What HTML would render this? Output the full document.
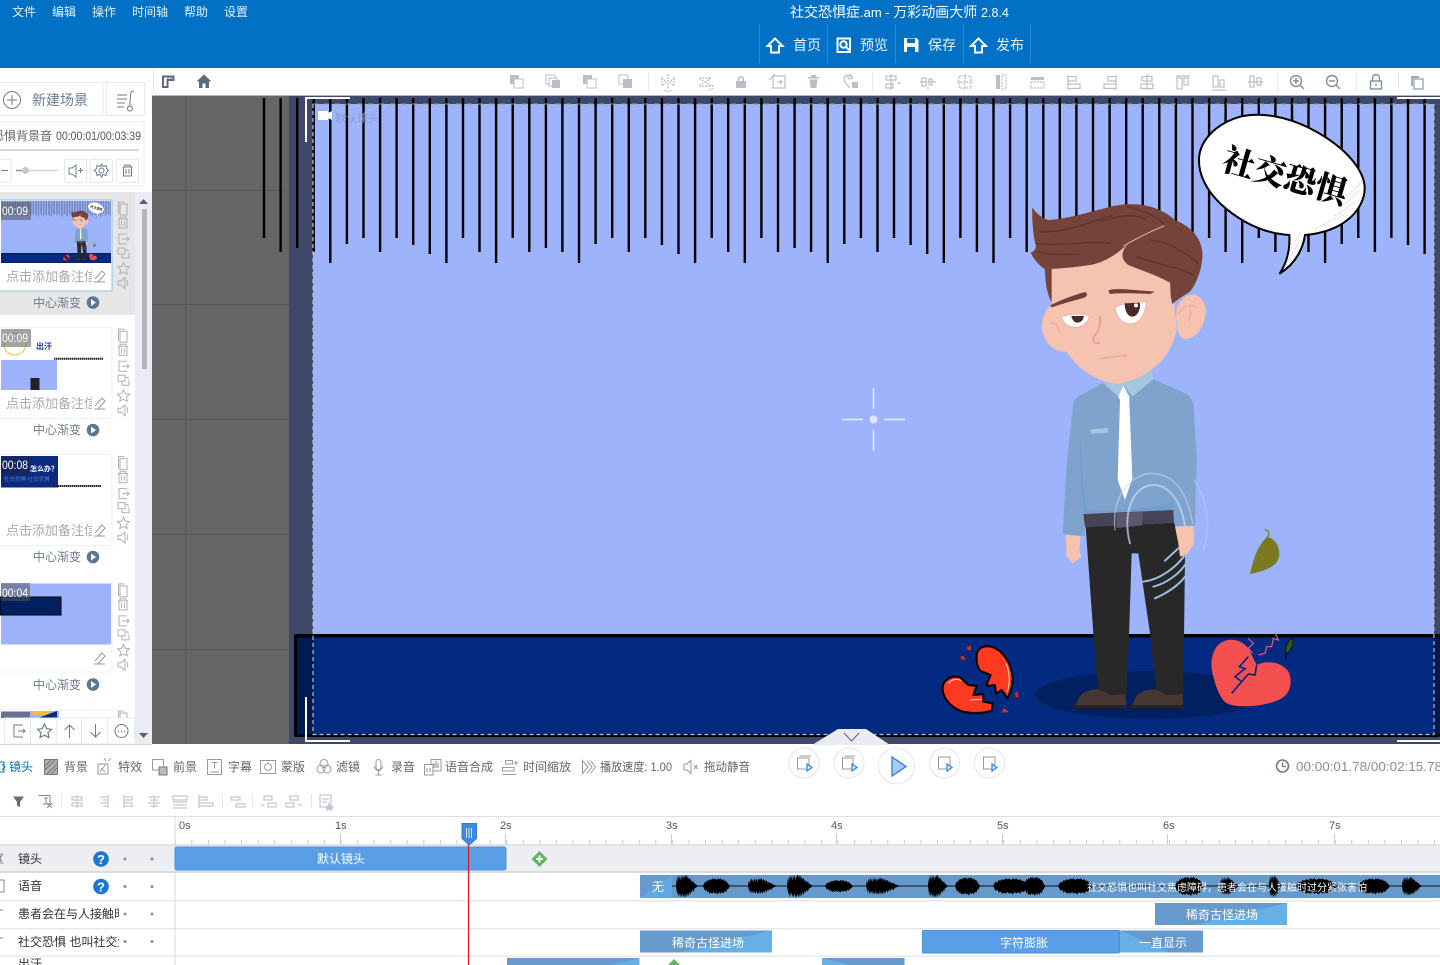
<!DOCTYPE html>
<html lang="zh"><head><meta charset="utf-8"><title>万彩动画大师</title>
<style>
html,body{margin:0;padding:0;background:#fff;width:1440px;height:965px;overflow:hidden}
svg{display:block;position:absolute;left:0;top:0}
text{font-family:"Liberation Sans","Noto Sans CJK SC",sans-serif;font-size:12px;fill:#666}
.m{fill:#e6f0fa}.n{fill:#eef5fc;font-size:14px}
.t{fill:#666;font-size:12px}
.w{fill:#fff;font-size:12px;text-anchor:middle}
.l{fill:#333;font-size:12px}
.g{fill:none;stroke:#b9bfc9;stroke-width:1.2}
.f{fill:#b9bfc9}
.k{fill:none;stroke:#9a9a9a;stroke-width:1}
.c{fill:none;stroke:#b0b0b0;stroke-width:1}
.s{fill:none;stroke:#c2c8d2;stroke-width:1.2}
.tr{fill:#6b7c90;font-size:12px}
.nt{fill:#aaa;font-size:13px}
.tm{fill:#fff;font-size:12px}
</style></head><body>
<svg width="1440" height="965" viewBox="0 0 1440 965" xmlns="http://www.w3.org/2000/svg">
<defs>
<clipPath id="c0"><rect x="1" y="201" width="110" height="62"/></clipPath>
<clipPath id="cl"><rect x="0" y="846" width="119" height="119"/></clipPath>
<clipPath id="cn"><rect x="0" y="190" width="92" height="560"/></clipPath>
<clipPath id="cp"><rect x="0" y="192" width="152" height="526"/></clipPath>
<pattern id="tk" x="174.8" y="0" width="16.57" height="10" patternUnits="userSpaceOnUse"><rect width="1" height="10" fill="#c8c8c8"/></pattern>
<path id="wb1" d="M0 0L3 -7 5 -3 8 -9 10 -5 13 -10 15 -6 18 -9 20 -4 23 -10 26 -6 29 -10 32 -5 35 -9 38 -7 41 -10 44 -8 47 -10 50 -6 53 -9 56 -7 60 -6 64 -7 68 -4 72 -5 76 -3 80 -4 85 -2 90 -1.500 100 0L90 1.500 85 2 80 5 76 3 72 6 68 4 64 8 60 5 56 9 53 6 50 10 47 7 44 10 41 6 38 10 35 8 32 10 29 6 26 10 23 7 20 10 18 5 15 9 13 6 10 10 8 4 5 8 3 4z"/>
<path id="wb2" d="M0 0L4 -3 8 -5 12 -4 16 -7 20 -6 25 -8 30 -7 35 -9 40 -8 45 -9 50 -7 55 -9 60 -8 65 -9 70 -7 75 -8 80 -6 85 -6 90 -4 95 -2 100 0L95 3 90 4 85 7 80 6 75 9 70 7 65 9 60 7 55 10 50 8 45 9 40 7 35 9 30 8 25 9 20 6 16 8 12 4 8 6 4 3z"/>
<g id="d" stroke="#000" stroke-width="2.400">
<path d="M0 98V238M16.600 98V252M33.200 98V248M49.700 98V252M66.300 98V263M82.900 98V244M99.500 98V238M116.100 98V252M132.600 98V238M149.200 98V245M165.800 98V254M182.400 98V263M199 98V238M215.500 98V252M232.100 98V263"/>
</g>
<g id="ci">
<path class="c" d="M120 204h7v11h-7zM118.500 214v-12h6"/>
<path class="c" d="M118 219h10M120 219v-2h6v2M119 219v9h8v-9M121.500 221v5M124.500 221v5"/>
<path class="c" d="M127 234h-8v10h8M122 239h7M127 237l2 2-2 2"/>
<path class="c" d="M118 248h7v6h-7zM122 254v4h7v-5M125 250h3v2"/>
<path class="c" d="M123.500 262.500l1.800 3.900 4.200.5-3.100 2.900.8 4.200-3.700-2.100-3.700 2.100.8-4.200-3.100-2.900 4.200-.5z"/>
<path class="c" d="M118 281v4h3l4 3.500v-11l-4 3.500zM127 280c1 1.500 1 4 0 5.500"/>
</g>
<g id="scene">
<rect x="313" y="104" width="1121" height="631" fill="#9db3fb"/>
<use href="#d" x="264"/><use href="#d" x="512.700"/><use href="#d" x="761.400"/><use href="#d" x="1010.100"/><use href="#d" x="1258.800"/>
<rect x="294" y="634" width="1146" height="103" rx="2" fill="#000"/>
<rect x="297" y="637.500" width="16" height="97" fill="#001a52"/>
<rect x="313" y="637.500" width="1121" height="97" fill="#022a80"/>
<rect x="1434" y="637.500" width="6" height="97" fill="#001a52"/>
<g transform="translate(920,400) scale(.33333)">
<ellipse cx="690" cy="885" rx="345" ry="72" fill="#00205f"/>
<path fill="#7fa3cc" d="M460 9C462 -5 480 -15 485 -15L545 -50 700 -62 770 -32 805 -15 820 9 830 170 825 378 762 378 760 340 490 340 495 408 428 402 440 190z"/>
<path fill="#6a9fd6" d="M492 338L760 330 760 305C700 325 600 335 500 330 490 290 485 200 482 100 478 200 485 300 492 338z" opacity=".8"/>
<path fill="#a7c5de" d="M550 -50L595 -10 612 -43 637 -10 700 -62 695 -85 560 -70z"/>
<path fill="#fff" d="M595 -10L610 -43 628 -10 628 0 637 235 615 300 593 240 600 0z"/>
<path fill="#a7c5de" d="M512 88L564 84 564 98 514 101z"/>
<path fill="#282828" d="M497 380L762 368 795 470 790 885 710 885 690 700 655 460 635 460 628 680 620 885 535 885 520 700z"/>
<path fill="#454355" d="M490 342L760 330 762 368 495 382z"/>
<path fill="#5a586a" d="M590 340L667 335 667 376 590 384z"/>
<path fill="#f6c3b0" d="M437 405L482 408 478 450 484 470 458 490 440 470zM765 380L820 378 823 430 800 465 780 470 775 430z"/>
<path fill="#463733" d="M468 915C475 885 495 868 530 868 550 870 565 885 575 885L615 882 620 915zM637 915C645 885 665 868 700 868 720 870 735 885 745 885L788 882 790 915z"/>
<path fill="#2a2220" d="M462 915H622V925H462zM630 915H792V925H630z"/>
<g fill="none" stroke="#c8daf2" stroke-linecap="round">
<path stroke-width="4" opacity=".6" d="M585 390C575 300 620 230 690 220 760 220 800 270 818 370"/>
<path stroke-width="6" opacity=".7" d="M630 430C605 340 640 255 700 255 750 255 785 310 795 380"/>
<path stroke-width="5" opacity=".35" d="M822 240C870 310 870 390 850 450"/>
<path stroke="#9dbde6" stroke-width="6" d="M735 482L775 445M670 545C720 540 770 500 795 465M700 560C740 550 780 520 798 490M705 595C750 575 780 550 795 530"/>
</g>
<path fill="#7c7a20" d="M1042 410C1065 418 1078 435 1078 465 1075 490 1055 510 990 522 1000 480 1010 440 1042 410z"/>
<path fill="none" stroke="#8a8a3a" stroke-width="5" d="M1042 412C1052 400 1045 392 1034 388"/>
<path fill="#f45050" d="M985 745C965 720 930 710 900 730 875 750 868 790 880 830 890 870 905 905 925 912 960 925 1040 920 1085 895 1110 880 1120 845 1105 815 1085 785 1040 780 1010 795z"/>
<path fill="none" stroke="#022a80" stroke-width="5" d="M985 770L958 800 975 806 945 830 965 845 935 880M985 822L1005 825 1010 795M965 845L985 822"/>
<path fill="none" stroke="#e0607a" stroke-width="3.500" d="M985 715L1000 730 985 745 998 760M1015 765L1035 760 1040 740 1055 740 1060 715 1075 720 1065 698"/>
<path fill="#2c5a20" stroke="#000" stroke-width="2" d="M1118 715C1105 720 1095 735 1097 762 1112 755 1122 735 1118 715z"/>
<path stroke="#000" stroke-width="3" d="M1098 755V780"/>
<g fill="#ff3a20" stroke="#000" stroke-width="6" stroke-linejoin="round">
<path d="M170 765C172 745 190 735 215 740 250 752 275 790 278 835 278 860 270 880 262 895L245 870 228 882 225 855 198 858 212 825 180 812C172 800 168 785 170 765z"/>
<path d="M68 860C72 838 95 825 120 832L145 855 170 858 160 885 190 882 190 905 218 910 215 932C190 940 150 942 120 932 90 920 65 890 68 860z"/>
</g>
<path fill="none" stroke="#ffd0c0" stroke-width="3" d="M258 790C270 820 270 850 262 875M85 850C95 838 110 835 125 842M150 900L185 898"/>
<path fill="#e02a18" d="M140 742L152 736 154 748 144 752zM120 770L132 768 136 780 124 778zM284 878L294 876 296 890 288 894zM244 938L252 924 268 936z"/>
<g transform="translate(240,-900)">
<path fill="#f6c3b0" d="M530 625C550 570 610 570 617 630 615 680 590 715 555 718 535 715 525 680 530 625z"/>
<path fill="#f6c3b0" d="M150 470L385 420 515 530 530 690C515 760 470 825 355 852 280 845 230 800 200 755 165 760 130 730 126 680 125 650 140 630 155 610z"/>
<path fill="none" stroke="#e8a79a" stroke-width="3" d="M535 640C555 615 575 610 590 625M570 625C575 640 570 655 565 665M152 672C165 660 175 680 180 700"/>
<path fill="#76433b" d="M97 322C105 335 125 355 145 360 200 358 290 330 340 318 400 305 470 312 525 360 560 375 600 400 607 455 610 500 590 550 570 575 555 585 530 600 517 612 510 590 512 565 510 548 470 525 420 510 385 495 365 480 358 460 385 430 350 465 310 488 270 495 220 503 180 505 155 507L155 608C140 580 135 540 135 508 115 495 100 475 92 458 100 455 106 450 108 440 100 410 95 360 97 322z"/>
<path fill="none" stroke="#5f322c" stroke-width="4" d="M115 395C190 400 260 370 340 345M108 430C200 440 270 420 330 430M110 455C160 465 210 465 235 462M300 365C360 345 410 340 440 360M410 470C460 490 530 500 580 525M450 420C510 425 560 460 595 490M380 320C430 330 470 350 490 370"/>
<path fill="none" stroke="#e6b7a0" stroke-width="3" d="M370 438C410 415 450 395 493 377"/>
<path fill="#6f3f38" d="M150 616C185 600 220 585 255 576 265 582 262 590 250 594 215 603 185 612 155 622zM325 572C335 562 400 570 465 575L450 582C410 580 360 578 330 582z"/>
<path fill="#fff" stroke="#eab0b5" stroke-width="3" d="M184 650C210 640 250 640 268 648 265 672 240 685 220 682 200 680 188 665 184 650z"/>
<path fill="#fff" stroke="#eab0b5" stroke-width="3" d="M345 622C375 605 415 605 438 605 438 640 420 670 395 672 365 672 348 650 345 622z"/>
<path fill="#4a2a28" d="M214 648H252C250 660 243 668 232 668 222 668 216 658 214 648zM374 610L420 608C422 630 412 650 397 650 382 650 374 630 374 610z"/>
<circle cx="408" cy="616" r="6" fill="#fff"/>
<path fill="none" stroke="#e59aa5" stroke-width="5" stroke-linecap="round" d="M300 650C302 680 295 695 281 710 275 725 290 735 297 728"/>
<path fill="none" stroke="#e8a090" stroke-width="3" d="M297 777C325 772 355 768 381 767"/>
</g>
</g>
<g transform="translate(1000,100) scale(.33333)">
<path fill="#fff" stroke="#000" stroke-width="6" stroke-linejoin="round" d="M597 175C600 120 650 70 720 50 785 35 860 50 930 85 1000 120 1060 170 1085 225 1110 280 1080 340 1020 375 990 392 950 402 915 405 910 440 890 490 840 520 865 480 870 440 868 405 790 400 720 365 660 310 620 270 595 225 597 175z"/>
<path fill="none" stroke="#bbb" stroke-width="3" stroke-dasharray="3 5" d="M1085 245L1040 290M1075 275L1020 325M1060 310L1000 350M1030 345L945 385M900 400L870 450M895 430L860 490"/>
</g>
<text transform="translate(1282,187) rotate(16)" text-anchor="middle" style="font-family:'Noto Serif CJK SC','Liberation Serif',serif;font-size:32px;font-weight:900;fill:#000">社交恐惧</text>
</g>
</defs>

<!-- top bar -->
<rect width="1440" height="68" fill="#0071c5"/>
<text class="m" x="12" y="16">文件</text><text class="m" x="52" y="16">编辑</text><text class="m" x="92" y="16">操作</text><text class="m" x="132" y="16">时间轴</text><text class="m" x="184" y="16">帮助</text><text class="m" x="224" y="16">设置</text>
<text x="790" y="17" style="font-size:14px;fill:#fff">社交恐惧症<tspan style="font-size:13px">.am - </tspan>万彩动画大师 <tspan style="font-size:12.500px">2.8.4</tspan></text>
<path d="M759.500 24V63M827.500 24V63M895.500 24V63M963.500 24V63M1030.500 24V63" stroke="#2d8ad2"/>
<g fill="none" stroke="#fff" stroke-width="2">
<path d="M775 38.500L767.500 46H771V52.500H779V46H782.500z"/>
<rect x="837.500" y="38.500" width="12.500" height="13.500"/>
<circle cx="843.500" cy="44.500" r="3.200"/><path d="M846 47L849 50"/>
<path d="M978.500 38.500L971 46H975V52.500H982V46H986z"/>
</g>
<path fill="#fff" d="M904 38H916.500L918.500 40V52H904zM907 38.500V43H915V38.500zM907 47V52H915V47z" fill-rule="evenodd"/>
<text class="n" x="793" y="50">首页</text><text class="n" x="860" y="50">预览</text><text class="n" x="928" y="50">保存</text><text class="n" x="996" y="50">发布</text>

<!-- toolbar -->
<rect x="0" y="68" width="1440" height="27" fill="#fff"/>
<rect x="152" y="95" width="1288" height="1.500" fill="#b4b8be"/>
<rect x="153" y="68" width="1" height="28" fill="#e8ebf0"/>
<path fill="none" stroke="#5a6b80" stroke-width="2" d="M163 87V76.500H173.500V80H167.500V87z"/>
<path d="M168 79V77M171 79V77" stroke="#5a6b80"/>
<path fill="#5a6b80" d="M204 74.500L196.500 81.500H199V88H202.500V83.500H205.500V88H209V81.500H211.500z"/>
<g>
<rect class="f" x="510" y="75" width="9" height="9"/><rect x="514" y="79" width="9" height="9" fill="#fff" stroke="#b9bfc9"/>
<rect x="546" y="75" width="9" height="9" fill="#fff" stroke="#b9bfc9"/><rect x="549" y="78" width="8" height="8" fill="#fff" stroke="#b9bfc9"/><rect class="f" x="552" y="80" width="8" height="8"/>
<rect class="f" x="583" y="75" width="9" height="9"/><rect x="587" y="79" width="9" height="9" fill="#fff" stroke="#b9bfc9"/>
<rect x="619" y="75" width="9" height="9" fill="#fff" stroke="#b9bfc9"/><rect class="f" x="623" y="79" width="9" height="9"/>
</g>
<path d="M648.500 72V92M872.500 72V92M1277.500 72V92M1356.500 72V92M1398.500 72V92" stroke="#e6e9ee"/>
<path class="g" stroke-dasharray="2 1" d="M668 74V90M662 78V86L666 82zM674 78V86L670 82zM664 90C666 92 670 92 672 90"/>
<path class="g" stroke-dasharray="2 1" d="M699 78H711L705 82zM699 86H711L705 82zM712 85C714 88 712 90 708 90"/>
<path class="f" d="M736 81H746V88H736zM738 81V79C738 75 744 75 744 79V81H742.500V79C742.500 77 739.500 77 739.500 79V81z"/>
<path class="g" d="M773 76H785V88H773zM771 78L775 74M769 80L773 76M777 82H782M780 80L782 82 780 84"/>
<path class="f" d="M808 77H819V78.500H808zM811 75H816V77H811zM809.500 79.500H817.500L816.500 88H810.500z"/>
<path class="g" d="M850 88C846 84 844 81 844 79 844 74 852 74 852 79M850 79a2 2 0 1 0-.1 0"/><rect class="f" x="852" y="82" width="6" height="6"/>
<path class="g" d="M891 74V90M886 76H896V80H886zM886 84H893V88H886zM897 83H901"/>
<path class="g" d="M920 82H936M922 78H926V86H922zM929 79H932V85H929zM928 87V90"/>
<path class="g" stroke-dasharray="2 1" d="M959 76H971V88H959zM965 74V90M957 82H973"/>
<path class="f" d="M996 75H1000V89H996z"/><path class="g" stroke-dasharray="2 1" d="M1002 75H1006V89H1002z"/>
<path class="f" d="M1031 77H1044V80H1031z"/><path class="g" stroke-dasharray="2 1" d="M1031 82H1044V88H1031z"/>
<path class="g" d="M1068 75V90M1068 76.500H1076V81H1068zM1068 84H1080V88.500H1068z"/>
<path class="g" d="M1116 75V90M1116 76.500H1108V81H1116zM1116 84H1104V88.500H1116z"/>
<path class="g" d="M1147 74V90M1142 76.500H1152V81H1142zM1141 84H1153V88.500H1141z"/>
<path class="g" d="M1176 76H1190M1177 78H1182V89H1177zM1184 78H1188V85H1184z"/>
<path class="g" d="M1212 90H1226M1213 76H1218V87H1213zM1220 80H1224V87H1220z"/>
<path class="g" d="M1248 82H1263M1250 76H1254V87H1250zM1257 78H1261V85H1257z"/>
<g fill="none" stroke="#7f8da0" stroke-width="1.400"><circle cx="1296" cy="81" r="5.500"/><path d="M1300 85L1304 89M1293 81H1299M1296 78V84"/><circle cx="1332" cy="81" r="5.500"/><path d="M1336 85L1340 89M1329 81H1335"/><rect x="1370.500" y="81" width="11" height="8"/><path d="M1372.500 81V78C1372.500 73.500 1379.500 73.500 1379.500 78V81"/><path d="M1376 84V86"/><path d="M1412 86V77H1419"/><rect x="1414" y="79" width="9" height="10" stroke="#9aa6b6"/></g>

<!-- canvas -->
<rect x="152" y="96" width="137" height="648" fill="#666"/>
<path d="M185.500 96V744M152 190.500H289M152 304.500H289M152 419.500H289M152 534.500H289M152 649.500H289" stroke="#565656"/>
<rect x="289" y="96" width="1151" height="648" fill="#3f4868"/>
<use href="#scene"/>
<path d="M313 104V734.500H1434V104" fill="none" stroke="#bbb" stroke-width="1.200" stroke-dasharray="4 3"/>
<path d="M313 104H1434" stroke="#a79a70" stroke-width="1" stroke-dasharray="5 6"/>
<path d="M306 142V98H350M1397 98H1440M306 697V741H350M1397 741H1440" fill="none" stroke="#fff" stroke-width="2"/>
<rect x="318" y="111" width="10" height="9" fill="#fff"/><path d="M328 113L332 111V120L328 118z" fill="#fff"/>
<text x="335" y="122" style="font-size:11px;fill:#8f9fd0">默认镜头</text>
<g stroke="#e8eeff" stroke-width="1.500" fill="none"><path d="M842 419.500H863M884 419.500H905M873.500 388V409M873.500 430V451"/></g>
<circle cx="873.500" cy="419.500" r="4" fill="#dfe6ff"/>
<path d="M812 745L838 729H866L890 745z" fill="#e8ebf1"/>
<path d="M844 733L851.500 741L859 733" fill="none" stroke="#5a6470"/>

<!-- left panel -->
<rect x="0" y="68" width="152" height="124" fill="#fff"/>
<rect x="-2" y="82.500" width="105" height="33" fill="#fff" stroke="#e6e9ef"/>
<rect x="106.500" y="82.500" width="38" height="33" fill="#fff" stroke="#e6e9ef"/>
<circle cx="12" cy="100" r="8.500" fill="none" stroke="#6b7c90"/><path d="M7 100H17M12 95V105" stroke="#6b7c90"/>
<text x="32" y="105" style="font-size:14px;fill:#6b7c90">新建场景</text>
<path d="M117 95H127M117 99H127M117 103H125M117 107H124M131 92C130 98 130 102 130 106M130 106A2.500 2.500 0 1 1 129.900 106M131 92L134 91" fill="none" stroke="#6b7c90"/>
<rect x="-2" y="121.500" width="146" height="64" fill="#fff" stroke="#eceff3"/>
<text x="-8" y="140">恐惧背景音</text><text x="56" y="140" textLength="85" lengthAdjust="spacingAndGlyphs" style="font-size:12px;fill:#555">00:00:01/00:03:39</text>
<rect x="0" y="149" width="139" height="2" fill="#d8d8d8"/>
<g fill="#fff" stroke="#e6e9ef"><rect x="-3" y="159.500" width="14" height="23" rx="1"/><rect x="64.500" y="159.500" width="22" height="23" rx="1"/><rect x="90.500" y="159.500" width="22" height="23" rx="1"/><rect x="116.500" y="159.500" width="22" height="23" rx="1"/></g>
<path d="M1 170.500H8" stroke="#6b7c90"/>
<path d="M16 170.500H22" stroke="#8a96a5" stroke-width="1.500"/><path d="M28 170.500H58" stroke="#d8d8d8" stroke-width="1.500"/><circle cx="25.500" cy="170.500" r="3.500" fill="#c4c8cc"/>
<path d="M69 168V174H72L76 177V165L72 168zM78 170.500H83M80.500 168V173" fill="none" stroke="#6b7c90"/>
<circle cx="101.500" cy="170.500" r="2.500" fill="none" stroke="#6b7c90"/><path d="M101.500 164L103 166.500 106 165.500 106.500 168.500 108.500 170.500 106.500 172.500 106 175.500 103 174.500 101.500 177 100 174.500 97 175.500 96.500 172.500 94.500 170.500 96.500 168.500 97 165.500 100 166.500z" fill="none" stroke="#6b7c90"/>
<path d="M122.500 167H132.500M125 167V165H130V167M123.500 167V176H131.500V167M126 169V174M129 169V174" fill="none" stroke="#6b7c90"/>

<rect x="0" y="192" width="135" height="552" fill="#fff"/>
<rect x="135" y="192" width="17" height="552" fill="#e9edf3"/>
<rect x="0" y="192" width="135" height="123" fill="#e6e6e6"/>
<path d="M139 204L143.500 199L148 204z" fill="#5a6470"/>
<rect x="142" y="209" width="5" height="160" fill="#b6b6b6"/>
<path d="M139 733L143.500 738L148 733z" fill="#5a6470"/>

<g clip-path="url(#cp)">
<!-- card 1 -->
<rect x="-2" y="200" width="114" height="91" fill="#fff" stroke="#8ec3e6"/>
<rect x="1" y="201" width="110" height="62" fill="#9db3fb"/>
<g clip-path="url(#c0)"><use href="#scene" transform="translate(-29.700,190.800) scale(.0981)"/></g>
<rect x="1" y="202" width="30" height="18" fill="#555" opacity=".55"/>
<text class="tm" x="2" y="215" textLength="26" lengthAdjust="spacingAndGlyphs">00:09</text>
<g clip-path="url(#cn)"><text class="nt" x="6" y="281">点击添加备注信息</text></g>
<path class="k" d="M94 282H105M95 279L102 271 105 274 98 282"/>
<text class="tr" x="33" y="307">中心渐变</text><circle cx="93" cy="302.500" r="6.300" fill="#5f7590"/><path d="M91 299V306L96 302.500z" fill="#fff"/>
<use href="#ci"/>
<!-- card 2 -->
<rect x="-2" y="327.500" width="114" height="91" fill="#fff" stroke="#f2f2f2"/>
<circle cx="15" cy="344" r="11" fill="none" stroke="#f0c040"/>
<rect x="1" y="329" width="30" height="18" fill="#666" opacity=".6"/>
<text class="tm" x="2" y="342" textLength="26" lengthAdjust="spacingAndGlyphs">00:09</text>
<text x="36" y="349" style="font-size:8px;font-weight:bold;fill:#1a3a9a">出汗</text>
<path d="M54 358.700H103" stroke="#222" stroke-width="2" stroke-dasharray="1.500 .5"/>
<rect x="1" y="360" width="56" height="30" fill="#9db3fb"/>
<rect x="30.500" y="378" width="9" height="12" fill="#222"/>
<g clip-path="url(#cn)"><text class="nt" x="6" y="408">点击添加备注信息</text></g>
<path class="k" d="M94 409H105M95 406L102 398 105 401 98 409"/>
<text class="tr" x="33" y="434">中心渐变</text><circle cx="93" cy="430" r="6.300" fill="#5f7590"/><path d="M91 426.500V433.500L96 430z" fill="#fff"/>
<use href="#ci" y="127.300"/>
<!-- card 3 -->
<rect x="-2" y="454.500" width="114" height="91" fill="#fff" stroke="#f2f2f2"/>
<rect x="1" y="456" width="57" height="31.500" fill="#0a2a80"/>
<text x="30" y="471" style="font-size:7px;font-weight:bold;fill:#fff">怎么办？</text>
<text x="4" y="481" style="font-size:5.500px;fill:#5c7bc8">社交恐惧 社交恐惧</text>
<rect x="1" y="457" width="28" height="18" fill="#223" opacity=".45"/>
<text class="tm" x="2" y="469" textLength="26" lengthAdjust="spacingAndGlyphs">00:08</text>
<path d="M54 486H101" stroke="#222" stroke-width="2" stroke-dasharray="1.500 .5"/>
<g clip-path="url(#cn)"><text class="nt" x="6" y="535">点击添加备注信息</text></g>
<path class="k" d="M94 536H105M95 533L102 525 105 528 98 536"/>
<text class="tr" x="33" y="561">中心渐变</text><circle cx="93" cy="557" r="6.300" fill="#5f7590"/><path d="M91 553.500V560.500L96 557z" fill="#fff"/>
<use href="#ci" y="254.600"/>
<!-- card 4 -->
<rect x="-2" y="582" width="114" height="90" fill="#fff" stroke="#f2f2f2"/>
<rect x="1" y="583.500" width="110" height="61" fill="#9db3fb"/>
<rect x="0" y="597" width="61" height="18" fill="#00205f" stroke="#000"/>
<rect x="1" y="583" width="29" height="18" fill="#555" opacity=".55"/>
<text class="tm" x="2" y="597" textLength="26" lengthAdjust="spacingAndGlyphs">00:04</text>
<path class="k" d="M94 664H105M95 661L102 653 105 656 98 664"/>
<text class="tr" x="33" y="689">中心渐变</text><circle cx="93" cy="684.500" r="6.300" fill="#5f7590"/><path d="M91 681V688L96 684.500z" fill="#fff"/>
<use href="#ci" y="381.900"/>
<!-- card 5 -->
<rect x="-2" y="710" width="114" height="30" fill="#fff" stroke="#f2f2f2"/>
<rect x="1" y="711" width="58" height="30" fill="#9db3fb"/><path d="M38 718L57 711V730H38z" fill="#0a2a80"/><path d="M30 711C35 717 45 717 52 711z" fill="#f8c020"/>
<rect x="1" y="712" width="29" height="18" fill="#444" opacity=".6"/>
<use href="#ci" y="509"/>
</g>
<!-- panel bottom buttons -->
<rect x="4.500" y="718" width="130" height="26" fill="#fff" stroke="#e6e9ef"/>
<path d="M30.500 718V744M57 718V744M81.500 718V744M107.500 718V744" stroke="#e6e9ef"/>
<path fill="none" stroke="#6b7c90" d="M23 725H14V737H23M18 731H25M23 729L25 731 23 733"/>
<path fill="none" stroke="#6b7c90" stroke-width="1.200" d="M44.500 724L46.700 728.700 51.500 729.300 48 732.700 49 737.600 44.500 735.200 40 737.600 41 732.700 37.500 729.300 42.300 728.700z"/>
<path fill="none" stroke="#6b7c90" d="M69.500 738V725M64.500 730L69.500 725 74.500 730M95.500 724V737M90.500 732L95.500 737 100.500 732"/>
<circle cx="121.500" cy="731" r="6.500" fill="none" stroke="#6b7c90"/><path d="M118 731.500H119M121 731.500H122M124 731.500H125" stroke="#6b7c90" stroke-width="1.500"/>
<rect x="0" y="744" width="152" height="1" fill="#cfd2d6"/>

<!-- toolbar row 1 -->
<path d="M0 762H4V772H0M2 764L5 767 2 770" fill="none" stroke="#0071c5"/>
<text x="9" y="771" style="font-size:12px;fill:#0071c5">镜头</text>
<rect x="44.500" y="759.500" width="13" height="15" fill="#b0b0b0" stroke="#777"/><path d="M45 766L51 760M45 770L55 760M47 774L57 764M51 774L57 768" stroke="#777"/>
<text class="t" x="64" y="771">背景</text>
<path class="k" d="M98 764H108V774H98zM104 758L106 761M111 758L109 761M106 764L100 772"/><path d="M101 768L105 772" stroke="#aaa"/>
<text class="t" x="118" y="771">特效</text>
<path class="k" d="M152.500 759.500H163.500V770H152.500z"/><rect x="159" y="767" width="8" height="8" fill="#bbb" stroke="#777"/>
<text class="t" x="173" y="771">前景</text>
<rect class="k" x="207.500" y="759.500" width="14" height="15"/><path class="k" d="M211.500 762.500H217.500M214.500 762.500V768.500M210 772H219"/>
<text class="t" x="228" y="771">字幕</text>
<rect class="k" x="260.500" y="760.500" width="15" height="13" fill="#eee"/><circle class="k" cx="268" cy="767" r="3.500"/>
<text class="t" x="281" y="771">蒙版</text>
<g class="k"><circle cx="324" cy="763.500" r="4"/><circle cx="321" cy="769" r="4"/><circle cx="327" cy="769" r="4"/></g>
<text class="t" x="336" y="771">滤镜</text>
<rect class="k" x="376" y="759.500" width="5" height="10" rx="2.500"/><path class="k" d="M374.500 766C374.500 772 382.500 772 382.500 766M378.500 771V775M375.500 775H381.500"/>
<text class="t" x="391" y="771">录音</text>
<path class="k" d="M424.500 764.500H433V775H424.500zM431 764V759.500H441V771H433"/><path d="M434 768V763M436 768V761M438 768V763M427 772V768M430 772V768" stroke="#888"/>
<text class="t" x="445" y="771">语音合成</text>
<path class="k" d="M505.500 760.500H512.500V764H505.500zM502.500 767.500H514V771H502.500zM502.500 774.500H516M514 763H518M516 761V765"/>
<text class="t" x="523" y="771">时间缩放</text>
<path class="k" d="M582.500 760.500V773.500L588 767zM587 760.500L592 767 587 773.500M590.500 760.500L595.500 767 590.500 773.500"/>
<text class="t" x="600" y="771" textLength="72" lengthAdjust="spacingAndGlyphs">播放速度: 1.00</text>
<path class="k" d="M684 764V770H687L691 773.500V760.500L687 764zM694 765L697.500 769M697.500 765L694 769"/>
<text class="t" x="704" y="771" textLength="46" lengthAdjust="spacingAndGlyphs">拖动静音</text>
<!-- playback -->
<g fill="#fff" stroke="#e4e4e4">
<ellipse cx="804" cy="763" rx="15" ry="15"/><ellipse cx="849" cy="763" rx="15" ry="15"/><ellipse cx="896.500" cy="766" rx="18" ry="18"/><ellipse cx="944.500" cy="763" rx="15" ry="15"/><ellipse cx="989.500" cy="763" rx="15" ry="15"/>
</g>
<g fill="none" stroke="#9a9a9a">
<path d="M797.500 758H809V769H797.500zM799.500 756H811"/>
<path d="M842.500 758H853V769H842.500zM844.500 756H855"/>
<path d="M938.500 757H950V769H938.500z"/>
<path d="M983.500 757H995V769H983.500z"/>
</g>
<g fill="#e6f1fd" stroke="#2d7fe0" stroke-width="1.200">
<path d="M807 764V771L812 767.500z"/><path d="M852 764V771L857 767.500z"/><path d="M947 764V771L952 767.500z"/><path d="M992 764V771L997 767.500z"/>
</g>
<path d="M892 757V776L906 766.500z" fill="#a9cbf0" stroke="#2d7fe0" stroke-width="1.300"/>
<circle cx="1282.500" cy="766" r="6" fill="none" stroke="#6b7c90" stroke-width="1.600"/><path d="M1282.500 762.500V766.500H1286" fill="none" stroke="#6b7c90" stroke-width="1.300"/>
<text x="1296" y="771" textLength="146" lengthAdjust="spacingAndGlyphs" style="font-size:13px;fill:#8a8f96">00:00:01.78/00:02:15.78</text>

<!-- toolbar row 2 -->
<path d="M13 796.500H24L20 802V807L17 805.500V802z" fill="#5f6d7e"/>
<path d="M38.500 795.500H50V804H43M44 798H48M46 798V803" fill="none" stroke="#7f8a98"/><path d="M47 803L52 808M52 803L47 808" stroke="#7f8a98"/>
<path d="M61.500 794V808M222.500 794V808M252.500 794V808M311.500 794V808" stroke="#e4e6ea"/>
<g class="s">
<path d="M77 795V808M72 797H82V800H72zM72 803H82V806H72z"/>
<path d="M108 795V808M100 797H108M103 800H108M100 803H108M103 806H108"/>
<path d="M124 795V808M124 797H132V800H124M124 803H132V806H124"/>
<path d="M154 795V808M148 797H160M150 800H158M148 803H160M150 806H158"/>
<path d="M173 796H187V800H173zM173 802H187M173 805H187M173 808H187" />
<path d="M199 795V808M199 797H207V800H199M199 803H213V806H199"/>
<path d="M231 797H240V800H231zM236 804H245V807H236z"/>
<path d="M264 796H272V800H264zM268 803H276V807H268zM261 805H265M290 796H298V800H290zM286 803H294V807H286zM298 805H302"/>
<path d="M320 795H331V807H320zM322 799H329M322 802H327"/>
</g>
<path d="M329 802L331 806 334 806.300 332 808.500 332.500 811 329 810 326 811 326.500 808.500 324.500 806.300 327.500 806z" fill="#c2c8d2"/>

<!-- ruler -->
<rect x="0" y="816" width="1440" height="1" fill="#dcdee2"/>
<text x="179" y="829" style="font-size:11px;fill:#555">0s</text><text x="335" y="829" style="font-size:11px;fill:#555">1s</text><text x="500" y="829" style="font-size:11px;fill:#555">2s</text><text x="666" y="829" style="font-size:11px;fill:#555">3s</text><text x="831" y="829" style="font-size:11px;fill:#555">4s</text><text x="997" y="829" style="font-size:11px;fill:#555">5s</text><text x="1163" y="829" style="font-size:11px;fill:#555">6s</text><text x="1329" y="829" style="font-size:11px;fill:#555">7s</text>
<rect x="175" y="840" width="1265" height="4" fill="url(#tk)"/>
<path d="M340.500 834V844M505.500 834V844M671.500 834V844M836.500 834V844M1002.500 834V844M1167.500 834V844M1334.500 834V844" stroke="#c8c8c8"/>
<rect x="0" y="844" width="1440" height="2" fill="#e0e2e6"/>
<rect x="0" y="846" width="1440" height="25" fill="#eceef2"/>
<rect x="0" y="871" width="1440" height="2" fill="#d9dbdf"/>
<rect x="0" y="900" width="1440" height="1.500" fill="#e6e8eb"/>
<rect x="0" y="928" width="1440" height="1.500" fill="#e6e8eb"/>
<rect x="0" y="955.500" width="1440" height="1.500" fill="#e6e8eb"/>
<rect x="174.500" y="816" width="1" height="149" fill="#d6d8dc"/>
<!-- row labels -->
<path d="M0 853V864M3 853L0 858.500 3 864M0 880H4V892H0M-1 910H3M-1 938H3" fill="none" stroke="#888"/>
<g clip-path="url(#cl)">
<text class="l" x="18" y="863">镜头</text><text class="l" x="18" y="890">语音</text><text class="l" x="18" y="918">患者会在与人接触时</text><text class="l" x="18" y="946">社交恐惧 也叫社交焦</text><text class="l" x="18" y="968">出汗</text>
</g>
<circle cx="101" cy="859" r="7.800" fill="#1c75d2"/><circle cx="101" cy="886.500" r="7.800" fill="#1c75d2"/>
<text x="101" y="864" text-anchor="middle" style="font-size:13px;font-weight:bold;fill:#fff">?</text><text x="101" y="891.500" text-anchor="middle" style="font-size:13px;font-weight:bold;fill:#fff">?</text>
<g fill="#8a8f96"><circle cx="125" cy="859" r="1.500"/><circle cx="152" cy="859" r="1.500"/><circle cx="125" cy="886.500" r="1.500"/><circle cx="152" cy="886.500" r="1.500"/><circle cx="125" cy="914" r="1.500"/><circle cx="152" cy="914" r="1.500"/><circle cx="125" cy="941.500" r="1.500"/><circle cx="152" cy="941.500" r="1.500"/></g>
<!-- blocks -->
<rect x="175" y="847" width="331" height="23" rx="2" fill="#5a9ee6" stroke="#4b90db"/>
<text class="w" x="341" y="863">默认镜头</text>
<path d="M539.500 851L547.500 859 539.500 867 531.500 859z" fill="#63b463"/><path d="M539.500 855.500V862.500M536 859H543" stroke="#fff" stroke-width="2"/>
<!-- voice -->
<rect x="640" y="875" width="800" height="23" rx="1" fill="#6699cc"/>
<path d="M640 898L672 875V898z" fill="#5fa8e6"/>
<text class="w" x="658" y="891">无</text>
<path d="M672 886H1440" stroke="#111" stroke-width="1"/>
<g fill="#000">
<use href="#wb1" transform="translate(676,886) scale(.22,1.150)"/>
<use href="#wb2" transform="translate(703,886) scale(.27,.85)"/>
<use href="#wb1" transform="translate(748,886) scale(.29,.8)"/>
<use href="#wb1" transform="translate(787,886) scale(.26,1.150)"/>
<use href="#wb2" transform="translate(825,886) scale(.28,.65)"/>
<use href="#wb1" transform="translate(866,886) scale(.34,.85)"/>
<use href="#wb1" transform="translate(928,886) scale(.2,1.150)"/>
<use href="#wb2" transform="translate(955,886) scale(.25,.95)"/>
<use href="#wb2" transform="translate(993,886) scale(.36,.85)"/>
<use href="#wb2" transform="translate(1023,886) scale(.22,1)"/>
<use href="#wb2" transform="translate(1058,886) scale(.35,.85)"/>
<use href="#wb2" transform="translate(1175,886) scale(.29,1)"/>
<use href="#wb1" transform="translate(1220,886) scale(.19,.9)"/>
<use href="#wb1" transform="translate(1269,886) scale(.13,1.100)"/>
<use href="#wb2" transform="translate(1296,886) scale(.41,.85)"/>
<use href="#wb2" transform="translate(1358,886) scale(.32,.85)"/>
<use href="#wb1" transform="translate(1402,886) scale(.2,.95)"/>
</g>
<text x="1087" y="891" style="font-size:10px;fill:#fff">社交恐惧也叫社交焦虑障碍，患者会在与人接触时过分紧张害怕</text>
<!-- row 3 -->
<rect x="1155" y="903" width="132" height="22" fill="#6699cc"/><path d="M1287 903V925H1195z" fill="#66b0e6"/>
<text class="w" x="1222" y="919">稀奇古怪进场</text>
<!-- row 4 -->
<rect x="640" y="930.500" width="132" height="22" fill="#6699cc"/><path d="M772 930.500V952.500H680z" fill="#66b0e6"/>
<text class="w" x="708" y="947">稀奇古怪进场</text>
<rect x="922.500" y="930.500" width="197" height="22.500" rx="1" fill="#5a9ee6" stroke="#4b90db"/>
<text class="w" x="1024" y="947">字符膨胀</text>
<rect x="1120" y="930.500" width="83" height="22" fill="#6699cc"/><path d="M1120 930.500V952.500H1170z" fill="#66b0e6"/>
<text class="w" x="1163" y="947">一直显示</text>
<!-- row 5 -->
<rect x="507" y="958" width="132.500" height="7" fill="#6699cc"/><path d="M639.500 958V965H610z" fill="#66b0e6"/>
<path d="M674 959L682 967H666z" fill="#63b463"/>
<rect x="822" y="958" width="82.500" height="7" fill="#6699cc"/><path d="M822 958V965H850z" fill="#66b0e6"/>
<!-- playhead -->
<path d="M468.500 843V965" stroke="#e01818" stroke-width="1.200"/>
<path d="M462 823.500H476.500V838.500L469 845L462 838.500z" fill="#3f8be0" stroke="#2f79cf"/>
<path d="M466.500 828V838M469 828V838M471.500 828V838" stroke="#cfe3fa"/>
</svg>
</body></html>
